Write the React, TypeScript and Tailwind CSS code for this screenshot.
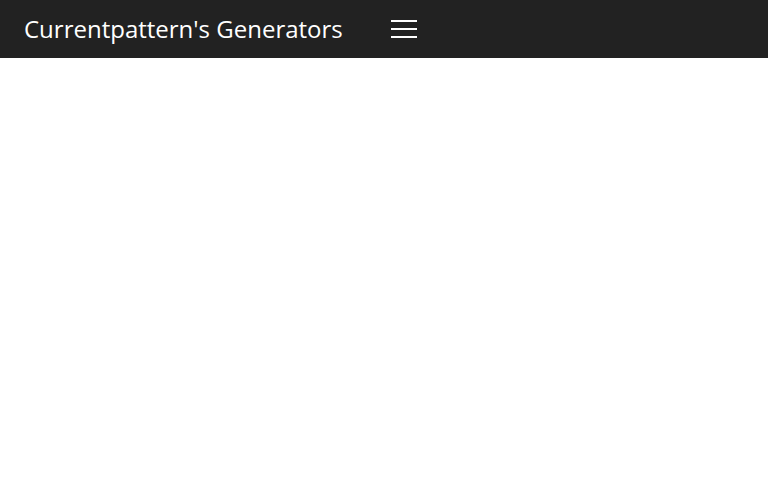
import React from 'react';

const App: React.FC = () => {
  return (
    <div className="min-h-screen bg-white" style={{ fontFamily: '"Open Sans", sans-serif' }}>
      {/* Header */}
      <div className="h-[58px] bg-[#222222] flex items-center px-6 gap-12">
        <h1 className="text-[24px] text-white font-normal leading-none">Currentpattern's Generators</h1>
        <button className="flex flex-col gap-[6px] w-[26px]">
          <span className="block h-[2px] w-full bg-white" />
          <span className="block h-[2px] w-full bg-white" />
          <span className="block h-[2px] w-full bg-white" />
        </button>
      </div>
    </div>
  );
};

export default App;
